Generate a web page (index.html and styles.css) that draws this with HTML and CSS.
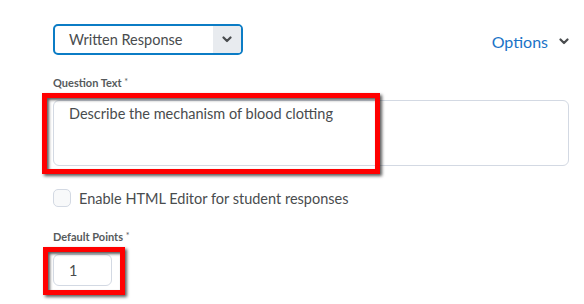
FILE: index.html
```html
<!DOCTYPE html>
<html>
<head>
<meta charset="utf-8">
<link rel="stylesheet" href="styles.css">
</head>
<body>
<div class="page">
  <div class="top-row">
    <div class="select">
      <span class="select-text">Written Response</span>
      <span class="select-btn">
        <svg width="10" height="7" viewBox="0 0 10 7"><path d="M1.5 1.5 L5 5 L8.5 1.5" fill="none" stroke="#494c4e" stroke-width="2.2" stroke-linecap="round" stroke-linejoin="round"/></svg>
      </span>
    </div>
    <div class="options">
      <span>Options</span>
      <svg width="10" height="7" viewBox="0 0 10 7"><path d="M1.5 1.5 L5 5 L8.5 1.5" fill="none" stroke="#494c4e" stroke-width="2.2" stroke-linecap="round" stroke-linejoin="round"/></svg>
    </div>
  </div>

  <div class="label q-label">Question Text <span class="req">*</span></div>
  <div class="field-wrap text-wrap">
    <div class="textarea">Describe the mechanism of blood clotting</div>
    <div class="highlight hl-text"></div>
  </div>

  <label class="check-row">
    <span class="checkbox"></span>
    <span class="check-text">Enable HTML Editor for student responses</span>
  </label>

  <div class="label p-label">Default Points <span class="req">*</span></div>
  <div class="field-wrap num-wrap">
    <div class="num-input">1</div>
    <div class="highlight hl-num"></div>
  </div>
</div>
</body>
</html>
```

FILE: styles.css
```css
html, body {
  margin: 0;
  padding: 0;
  background: #ffffff;
}
body {
  width: 584px;
  height: 304px;
  overflow: hidden;
  font-family: Lato, "Noto Sans", sans-serif;
  color: #494c4e;
}
.page {
  padding: 24px 15px 0 53px;
}
.top-row {
  display: flex;
  justify-content: space-between;
  align-items: center;
}
.select {
  display: flex;
  width: 190px;
  height: 31px;
  box-sizing: border-box;
  border: 2px solid #0b7cc5;
  border-radius: 5px;
  overflow: hidden;
}
.select-text {
  flex: 1;
  display: flex;
  align-items: center;
  padding-left: 14px;
  font-size: 14.5px;
  color: #494c4e;
}
.select-btn {
  width: 28px;
  background: #e8ebef;
  display: flex;
  align-items: center;
  justify-content: center;
}
.options {
  display: flex;
  align-items: center;
  gap: 11px;
  margin-top: 4px;
  font-size: 16px;
  color: #1a73c7;
}
.label {
  font-size: 11px;
  font-weight: 700;
  color: #565a5c;
}
.req {
  font-weight: 400;
  font-size: 9px;
  vertical-align: top;
}
.q-label {
  margin-top: 21px;
  height: 14px;
}
.field-wrap {
  position: relative;
}
.text-wrap {
  margin-top: 10px;
}
.num-wrap {
  margin-top: 10px;
}
.textarea {
  width: 516px;
  height: 66px;
  box-sizing: border-box;
  border: 1px solid #d3d9e3;
  border-radius: 6px;
  padding: 4px 15px;
  font-size: 14.5px;
  color: #494c4e;
}
.highlight {
  position: absolute;
  border: 5px solid #ff0000;
  box-shadow: 2px 2px 3px rgba(0, 0, 0, 0.65), inset 2px 2px 3px rgba(0, 0, 0, 0.65);
}
.hl-text {
  left: -11px;
  top: -7px;
  width: 328px;
  height: 71px;
}
.hl-num {
  left: -10px;
  top: -7px;
  width: 72px;
  height: 38px;
}
.check-row {
  display: flex;
  align-items: center;
  gap: 8px;
  margin-top: 23px;
}
.checkbox {
  width: 18px;
  height: 18px;
  box-sizing: border-box;
  border: 1px solid #d3d9e3;
  border-radius: 5px;
  background: #f8f9fa;
}
.check-text {
  font-size: 14.5px;
  color: #494c4e;
}
.p-label {
  margin-top: 23px;
  height: 14px;
}
.num-input {
  width: 59px;
  height: 32px;
  box-sizing: border-box;
  border: 1px solid #d3d9e3;
  border-radius: 6px;
  padding-left: 15px;
  display: flex;
  align-items: center;
  font-size: 14.5px;
  color: #494c4e;
}
```
